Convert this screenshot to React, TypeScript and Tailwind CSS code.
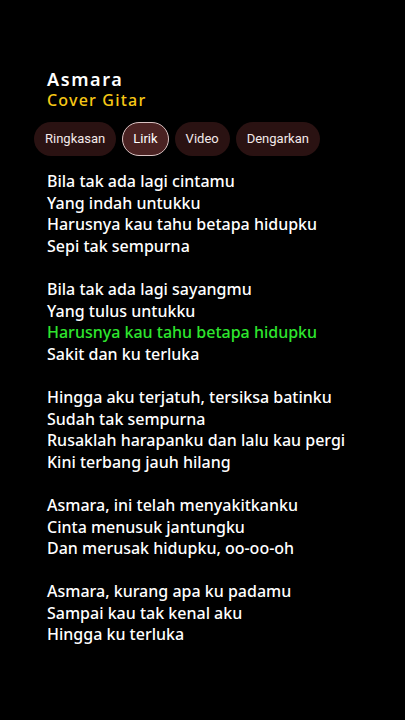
const stanzas = [
  [
    "Bila tak ada lagi cintamu",
    "Yang indah untukku",
    "Harusnya kau tahu betapa hidupku",
    "Sepi tak sempurna",
  ],
  [
    "Bila tak ada lagi sayangmu",
    "Yang tulus untukku",
    "Harusnya kau tahu betapa hidupku",
    "Sakit dan ku terluka",
  ],
  [
    "Hingga aku terjatuh, tersiksa batinku",
    "Sudah tak sempurna",
    "Rusaklah harapanku dan lalu kau pergi",
    "Kini terbang jauh hilang",
  ],
  [
    "Asmara, ini telah menyakitkanku",
    "Cinta menusuk jantungku",
    "Dan merusak hidupku, oo-oo-oh",
  ],
  [
    "Asmara, kurang apa ku padamu",
    "Sampai kau tak kenal aku",
    "Hingga ku terluka",
  ],
]

const tabs = ["Ringkasan", "Lirik", "Video", "Dengarkan"]

export default function App() {
  return (
    <div className="min-h-[720px] w-[405px] bg-black pt-[68px] font-['Noto_Sans',sans-serif]">
      <div className="px-[47px]">
        <h1 className="text-[18px] font-semibold leading-[22px] tracking-[1.6px] text-white">Asmara</h1>
        <p className="text-[16px] font-medium leading-[20px] tracking-[1.2px] text-[#f7c815]">Cover Gitar</p>
      </div>

      {/* tab chips */}
      <div className="mt-[12px] flex gap-[6px] px-[34px] font-['Roboto',sans-serif]">
        {tabs.map((t) => (
          <div
            key={t}
            className={
              t === "Lirik"
                ? "flex h-[34px] items-center rounded-full border border-[#d9c2c2] bg-[#4a2222] px-[10px] text-[13px] text-white"
                : "flex h-[34px] items-center rounded-full bg-[#2a1212] px-[11px] text-[13px] text-[#f3e9e9]"
            }
          >
            {t}
          </div>
        ))}
      </div>

      <div className="mt-[15px] px-[47px] text-[16px] font-medium leading-[21.6px] text-white">
        {stanzas.map((s, i) => (
          <div key={i} className={i > 0 ? "mt-[21.6px]" : ""}>
            {s.map((line, j) => (
              <p key={j} className={i === 1 && j === 2 ? "text-[#2ee62e]" : ""}>
                {line}
              </p>
            ))}
          </div>
        ))}
      </div>
    </div>
  )
}
